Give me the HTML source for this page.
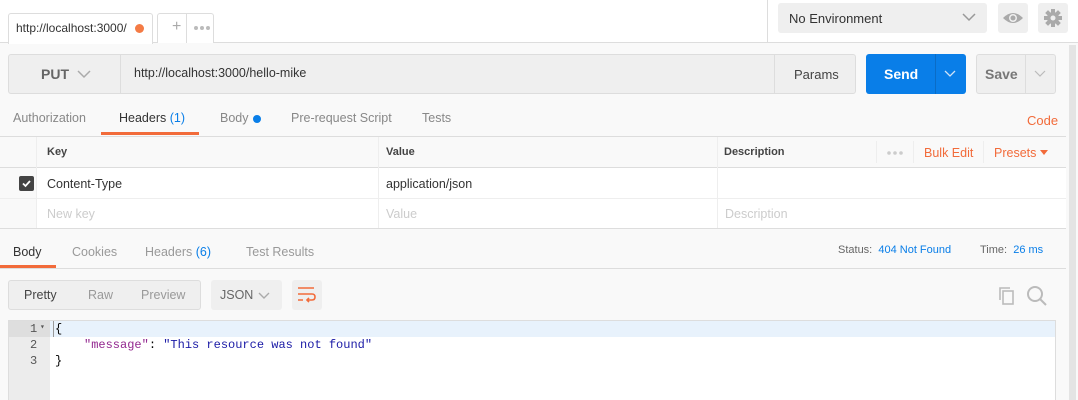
<!DOCTYPE html>
<html><head><style>
*{box-sizing:border-box;margin:0;padding:0}
body{width:1078px;height:400px;overflow:hidden;background:#f9f9f9;font-family:"Liberation Sans",sans-serif;font-size:13px;color:#333;position:relative}
.a{position:absolute}
.t{position:absolute;white-space:nowrap}
</style></head><body>
<div class="a" style="left:0;top:0;width:1078px;height:43px;background:#fff;border-bottom:1px solid #ddd"></div>
<div class="a" style="left:8px;top:13px;width:145px;height:31px;background:#fff;border:1px solid #ddd;border-bottom:none;border-radius:3px 3px 0 0"></div>
<div class="t" style="left:16px;top:21px;font-size:12px;color:#333">http://localhost:3000/</div>
<div class="a" style="left:135px;top:24px;width:9px;height:9px;border-radius:50%;background:#f47b45"></div>
<div class="a" style="left:157px;top:13px;width:57px;height:30px;border:1px solid #ddd;border-bottom:none;border-radius:3px 3px 0 0;background:#fff"></div>
<div class="a" style="left:186px;top:14px;width:1px;height:29px;background:#ddd"></div>
<div class="t" style="left:172px;top:18px;font-size:16px;color:#aaa">+</div>
<svg class="a" style="left:192px;top:25px" width="20" height="6"><g fill="#bbb"><circle cx="4" cy="3" r="2"/><circle cx="10" cy="3" r="2"/><circle cx="16" cy="3" r="2"/></g></svg>
<div class="a" style="left:767px;top:0;width:1px;height:43px;background:#ddd"></div>
<div class="a" style="left:778px;top:3px;width:209px;height:30px;background:#efefef;border-radius:3px"></div>
<div class="t" style="left:789px;top:11px;color:#333">No Environment</div>
<svg class="a" style="left:962px;top:12px" width="14" height="10"><path d="M1 2l6 6 6-6" fill="none" stroke="#999" stroke-width="1.5"/></svg>
<div class="a" style="left:998px;top:3px;width:30px;height:30px;background:#efefef;border-radius:3px"></div>
<svg class="a" style="left:1002px;top:10px" width="22" height="16"><path d="M1 8q10-10 20 0q-10 10-20 0z" fill="#aaa"/><circle cx="11" cy="8" r="4" fill="#efefef"/><circle cx="11" cy="8" r="2.5" fill="#aaa"/></svg>
<div class="a" style="left:1038px;top:3px;width:30px;height:30px;background:#efefef;border-radius:3px"></div>
<svg class="a" style="left:1043px;top:8px" width="20" height="20" viewBox="0 0 20 20"><g stroke="#aaa" stroke-width="4"><path d="M10 1v18M1 10h18M3.6 3.6l12.8 12.8M16.4 3.6L3.6 16.4"/></g><circle cx="10" cy="10" r="6" fill="#aaa"/><circle cx="10" cy="10" r="2.5" fill="#efefef"/></svg>
<div class="a" style="left:1069px;top:45px;width:7px;height:355px;background:#e4e4e4"></div>

<div class="a" style="left:8px;top:54px;width:848px;height:40px;background:#efefef;border:1px solid #ddd;border-radius:3px"></div>
<div class="a" style="left:120px;top:55px;width:1px;height:38px;background:#ddd"></div>
<div class="a" style="left:774px;top:55px;width:1px;height:38px;background:#ddd"></div>
<div class="t" style="left:41px;top:66px;font-size:14px;font-weight:bold;color:#666">PUT</div>
<svg class="a" style="left:77px;top:70px" width="14" height="9"><path d="M1 1l6 6 6-6" fill="none" stroke="#aaa" stroke-width="1.5"/></svg>
<div class="t" style="left:134px;top:66px;font-size:12.5px;color:#333">http://localhost:3000/hello-mike</div>
<div class="t" style="left:794px;top:67px;color:#444">Params</div>
<div class="a" style="left:866px;top:54px;width:100px;height:40px;background:#097ee8;border-radius:3px"></div>
<div class="a" style="left:935px;top:54px;width:1px;height:40px;background:#0a6cc6"></div>
<div class="t" style="left:884px;top:66px;font-size:14px;font-weight:bold;color:#fff">Send</div>
<svg class="a" style="left:944px;top:70px" width="12" height="8"><path d="M1 1l5 5 5-5" fill="none" stroke="#cfe3f7" stroke-width="1.3"/></svg>
<div class="a" style="left:976px;top:54px;width:80px;height:40px;background:#efefef;border:1px solid #ddd;border-radius:3px"></div>
<div class="a" style="left:1025px;top:55px;width:1px;height:38px;background:#ddd"></div>
<div class="t" style="left:985px;top:66px;font-size:14px;font-weight:bold;color:#777">Save</div>
<svg class="a" style="left:1034px;top:70px" width="12" height="8"><path d="M1 1l5 5 5-5" fill="none" stroke="#bbb" stroke-width="1.2"/></svg>

<div class="t" style="left:13px;top:111px;font-size:12.5px;color:#888">Authorization</div>
<div class="t" style="left:119px;top:111px;font-size:12.5px;color:#333">Headers <span style="color:#097ee8">(1)</span></div>
<div class="a" style="left:101px;top:132px;width:98px;height:3px;background:#f26b3a"></div>
<div class="t" style="left:220px;top:111px;font-size:12.5px;color:#888">Body</div>
<div class="a" style="left:253px;top:115px;width:8px;height:8px;border-radius:50%;background:#097ee8"></div>
<div class="t" style="left:291px;top:111px;font-size:12.5px;color:#888">Pre-request Script</div>
<div class="t" style="left:422px;top:111px;font-size:12.5px;color:#888">Tests</div>
<div class="t" style="left:1027px;top:113px;color:#f26b3a">Code</div>

<div class="a" style="left:0;top:136px;width:1066px;height:93px;border-top:1px solid #ddd;border-bottom:1px solid #ddd"></div>
<div class="a" style="left:0;top:167px;width:1066px;height:1px;background:#ddd"></div>
<div class="a" style="left:37px;top:168px;width:1029px;height:30px;background:#fff"></div>
<div class="a" style="left:37px;top:199px;width:1029px;height:29px;background:#fff"></div>
<div class="a" style="left:0;top:198px;width:1066px;height:1px;background:#eee"></div>
<div class="a" style="left:36px;top:137px;width:1px;height:91px;background:#eee"></div>
<div class="a" style="left:378px;top:137px;width:1px;height:91px;background:#eee"></div>
<div class="a" style="left:717px;top:137px;width:1px;height:91px;background:#eee"></div>
<div class="a" style="left:876px;top:141px;width:1px;height:22px;background:#eee"></div>
<div class="a" style="left:913px;top:141px;width:1px;height:22px;background:#eee"></div>
<div class="a" style="left:983px;top:141px;width:1px;height:22px;background:#eee"></div>
<div class="t" style="left:47px;top:146px;font-size:11px;font-weight:bold;color:#444">Key</div>
<div class="t" style="left:386px;top:146px;font-size:11px;font-weight:bold;color:#444">Value</div>
<div class="t" style="left:724px;top:146px;font-size:11px;font-weight:bold;color:#444">Description</div>
<svg class="a" style="left:886px;top:150px" width="18" height="6"><g fill="#ccc"><circle cx="3" cy="3" r="1.8"/><circle cx="9" cy="3" r="1.8"/><circle cx="15" cy="3" r="1.8"/></g></svg>
<div class="t" style="left:924px;top:146px;font-size:12.5px;color:#f26b3a">Bulk Edit</div>
<div class="t" style="left:994px;top:146px;font-size:12.5px;color:#f26b3a">Presets</div>
<svg class="a" style="left:1040px;top:150px" width="8" height="6"><path d="M0 0h8l-4 5z" fill="#f26b3a"/></svg>
<div class="a" style="left:19px;top:176px;width:15px;height:15px;background:#444;border-radius:2px"></div>
<svg class="a" style="left:21px;top:178px" width="11" height="11"><path d="M2 5.5l2.5 2.5 4.5-5" fill="none" stroke="#fff" stroke-width="1.8"/></svg>
<div class="t" style="left:47px;top:177px;font-size:12.5px;color:#333">Content-Type</div>
<div class="t" style="left:386px;top:177px;font-size:12.5px;color:#333">application/json</div>
<div class="t" style="left:47px;top:207px;font-size:12.5px;color:#ccc">New key</div>
<div class="t" style="left:386px;top:207px;font-size:12.5px;color:#ccc">Value</div>
<div class="t" style="left:725px;top:207px;font-size:12.5px;color:#ccc">Description</div>

<div class="a" style="left:0;top:268px;width:1066px;height:1px;background:#ddd"></div>
<div class="t" style="left:13px;top:245px;font-size:12.5px;color:#333">Body</div>
<div class="a" style="left:0;top:265px;width:56px;height:3px;background:#f26b3a"></div>
<div class="t" style="left:72px;top:245px;font-size:12.5px;color:#999">Cookies</div>
<div class="t" style="left:145px;top:245px;font-size:12.5px;color:#999">Headers <span style="color:#097ee8">(6)</span></div>
<div class="t" style="left:246px;top:245px;font-size:12.5px;color:#999">Test Results</div>
<div class="t" style="left:838px;top:244px;font-size:11px;color:#666">Status: <span style="color:#097ee8">&nbsp;404 Not Found</span></div>
<div class="t" style="left:980px;top:244px;font-size:11px;color:#666">Time: <span style="color:#097ee8">&nbsp;26 ms</span></div>

<div class="a" style="left:8px;top:280px;width:193px;height:30px;background:#efefef;border:1px solid #ddd;border-radius:3px"></div>
<div class="t" style="left:24px;top:288px;font-size:12.5px;color:#444">Pretty</div>
<div class="t" style="left:88px;top:288px;font-size:12.5px;color:#999">Raw</div>
<div class="t" style="left:141px;top:288px;font-size:12.5px;color:#999">Preview</div>
<div class="a" style="left:211px;top:280px;width:71px;height:30px;background:#efefef;border-radius:3px"></div>
<div class="t" style="left:220px;top:288px;font-size:12.5px;color:#666">JSON</div>
<svg class="a" style="left:258px;top:292px" width="12" height="8"><path d="M1 1l5 5 5-5" fill="none" stroke="#aaa" stroke-width="1.4"/></svg>
<div class="a" style="left:292px;top:280px;width:30px;height:30px;background:#efefef;border-radius:3px"></div>
<svg class="a" style="left:297px;top:286px" width="20" height="18"><g fill="none" stroke="#f26b3a" stroke-width="1.6"><path d="M1 2h16M1 8h14q3 0 3 3t-3 3h-5M1 14h5"/><path d="M12 12l-2 2 2 2"/></g></svg>
<svg class="a" style="left:998px;top:286px" width="20" height="20"><g fill="none" stroke="#bbb" stroke-width="1.6"><path d="M2 14V2h10"/><rect x="5" y="5" width="10" height="13" fill="#f9f9f9"/></g></svg>
<svg class="a" style="left:1026px;top:285px" width="22" height="22"><g fill="none" stroke="#bbb" stroke-width="2"><circle cx="9" cy="9" r="7"/><path d="M14 14l6 6"/></g></svg>

<div class="a" style="left:8px;top:320px;width:1048px;height:80px;background:#fff;border:1px solid #ddd;border-bottom:none"></div>
<div class="a" style="left:9px;top:321px;width:41px;height:79px;background:#ececec"></div>
<div class="a" style="left:50px;top:321px;width:1005px;height:16px;background:#e8f2fc"></div>
<div class="a" style="left:9px;top:321px;width:41px;height:16px;background:#dedede"></div>
<div class="a" style="left:53px;top:321px;width:1px;height:16px;background:#999"></div>
<div style="position:absolute;left:0;top:321px;font-family:'Liberation Mono',monospace;font-size:12px;line-height:16px;color:#555">
<div style="position:absolute;left:30px;top:0">1</div><div style="position:absolute;left:40px;top:-1px;font-size:8px">▾</div>
<div style="position:absolute;left:30px;top:16px">2</div>
<div style="position:absolute;left:30px;top:32px">3</div>
<div style="position:absolute;left:55px;top:0;color:#000">{</div>
<div style="position:absolute;left:84px;top:16px;white-space:pre;color:#000"><span style="color:#92278f">"message"</span>: <span style="color:#1a1aa6">"This resource was not found"</span></div>
<div style="position:absolute;left:55px;top:32px;color:#000">}</div>
</div>
</body></html>
